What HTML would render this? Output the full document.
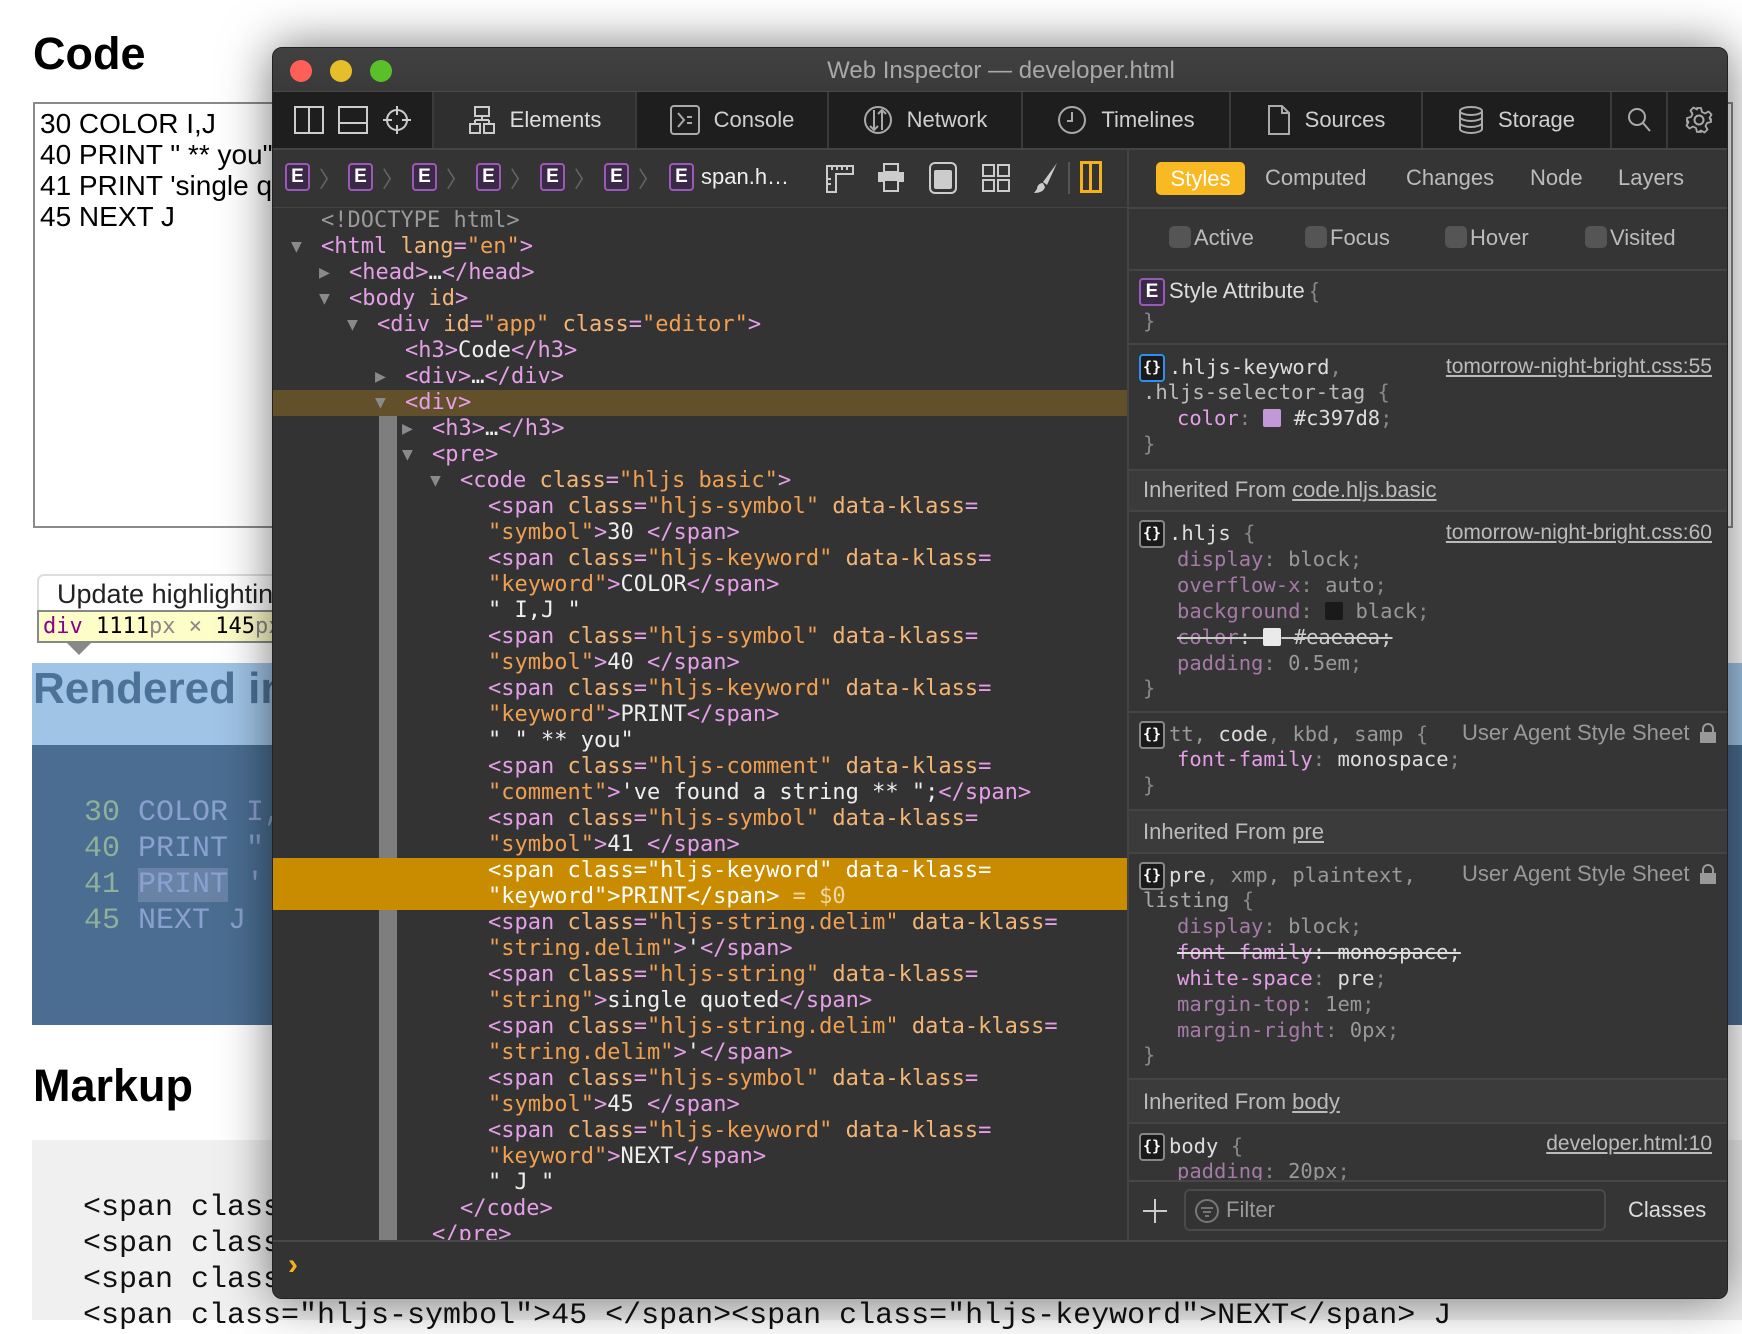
<!DOCTYPE html>
<html><head><meta charset="utf-8">
<style>
*{margin:0;padding:0;box-sizing:border-box}
body{width:1742px;height:1318px;overflow:hidden;background:#fff;position:relative;font-family:"Liberation Sans",sans-serif}
.a{position:absolute;white-space:pre}
.mono{font-family:"DejaVu Sans Mono","Liberation Mono",monospace}
#win{position:absolute;left:272px;top:47px;width:1456px;height:1252px;background:#333;border-radius:10px;box-shadow:0 0 50px rgba(0,0,0,.55);overflow:hidden;border:1px solid #222}
.t{color:#e59ee8}.n{color:#f2b575}.v{color:#f0a050}.x{color:#eee}.g{color:#999}
.tri{position:absolute;color:#8a8a8a;font-size:18px}
.tab{position:absolute;top:44px;height:56px;background:#1e1e1e;border-right:2px solid #3a3a3a;color:#cfcfcf;font-size:22px;display:flex;align-items:center;justify-content:center;gap:14px}
.eb{position:absolute;top:115px;width:25px;height:28px;border:2px solid #9b59b6;background:#3a2a48;border-radius:4px;color:#fff;font-weight:bold;font-size:19px;text-align:center;line-height:24px}
.chev{position:absolute;top:114px;color:#666;font-size:22px}
.sep{position:absolute;left:856px;width:600px;height:2px;background:#444}
.s{position:absolute;white-space:pre;font-size:22px;color:#ddd}
.sm{font-family:"DejaVu Sans Mono",monospace;font-size:20.5px}
.pp{color:#e59ee8}.pd{color:#a57aa7}.vd{color:#999}.pu{color:#888}
.ic{display:inline-block;width:26px;height:28px;border:2px solid #888;border-radius:4px;background:#1a1a1a;color:#fff;font-size:15px;font-weight:bold;text-align:center;line-height:23px;vertical-align:middle;margin-right:4px;font-family:"DejaVu Sans Mono",monospace}
.lnk{position:absolute;right:15px;color:#bbb;text-decoration:underline;font-size:21px}
.cb{display:inline-block;width:22px;height:22px;background:#555;border-radius:5px;vertical-align:-3px;margin-right:3px}
#dom div{position:relative;height:26px}
</style></head><body>

<div class="a" style="left:33px;top:28px;font-size:45px;font-weight:bold">Code</div>
<div class="a" style="left:33px;top:102px;width:1700px;height:426px;border:2px solid #8a8a8a"></div>
<div class="a" style="left:40px;top:108px;font-size:28px;line-height:31px">30 COLOR I,J
40 PRINT " ** you"
41 PRINT 'single quoted'
45 NEXT J</div>
<div class="a" style="left:37px;top:574px;width:300px;height:42px;border:2px solid #ddd;border-radius:7px"></div>
<div class="a" style="left:57px;top:579px;font-size:27px;color:#222">Update highlighting</div>
<div class="a mono" style="left:37px;top:610px;width:300px;height:33px;background:#fdfdc8;border:2px solid #888;font-size:22px;line-height:29px;padding-left:4px"><span style="color:#8b008b">div</span> 1111<span style="color:#888">px</span> <span style="color:#888">×</span> 145<span style="color:#888">px</span></div>
<div class="a" style="left:66px;top:642px;width:0;height:0;border-left:13px solid transparent;border-right:13px solid transparent;border-top:13px solid #888"></div>
<div class="a" style="left:32px;top:663px;width:1710px;height:82px;background:#a0c4e6"></div>
<div class="a" style="left:33px;top:664px;font-size:44px;font-weight:bold;color:#4d7298">Rendered in</div>
<div class="a" style="left:32px;top:745px;width:1710px;height:280px;background:#4a6d91"></div>
<div class="a" style="left:84px;top:795px;font-family:'Liberation Mono',monospace;font-size:30px;line-height:36px;color:#8aa0d0"><span style="color:#8fb09a">30</span> COLOR I,J
<span style="color:#8fb09a">40</span> PRINT "
<span style="color:#8fb09a">41</span> <span style="background:#6883a6">PRINT</span> '
<span style="color:#8fb09a">45</span> NEXT J</div>
<div class="a" style="left:33px;top:1060px;font-size:45px;font-weight:bold">Markup</div>
<div class="a" style="left:32px;top:1140px;width:1710px;height:180px;background:#f0f0f0"></div>
<div class="a" style="left:83px;top:1190px;font-family:'Liberation Mono',monospace;font-size:30px;line-height:36px;color:#111">&lt;span class="hljs-symbol"&gt;30 &lt;/span&gt;
&lt;span class="hljs-symbol"&gt;40 &lt;/span&gt;
&lt;span class="hljs-symbol"&gt;41 &lt;/span&gt;
&lt;span class="hljs-symbol"&gt;45 &lt;/span&gt;&lt;span class="hljs-keyword"&gt;NEXT&lt;/span&gt; J</div>

<div id="win">
 <div class="a" style="left:0;top:0;width:1456px;height:44px;background:linear-gradient(#414141,#3a3a3a);border-bottom:1px solid #4a4a4a"></div>
 <div class="a" style="left:17px;top:12px;width:22px;height:22px;border-radius:50%;background:#fe5f57"></div>
 <div class="a" style="left:57px;top:12px;width:22px;height:22px;border-radius:50%;background:#e6be29"></div>
 <div class="a" style="left:97px;top:12px;width:22px;height:22px;border-radius:50%;background:#5ac02a"></div>
 <div class="a" style="left:0;width:1456px;top:9px;text-align:center;font-size:24px;color:#a8a8a8">Web Inspector — developer.html</div>
 <div class="tab" style="left:0;width:161px;gap:14px">
  <svg width="30" height="28"><rect x="1" y="1" width="28" height="26" fill="none" stroke="#ccc" stroke-width="2"/><line x1="15" y1="1" x2="15" y2="27" stroke="#ccc" stroke-width="2"/></svg>
  <svg width="30" height="28"><rect x="1" y="1" width="28" height="26" fill="none" stroke="#ccc" stroke-width="2"/><line x1="1" y1="17" x2="29" y2="17" stroke="#ccc" stroke-width="2"/></svg>
  <svg width="30" height="30"><circle cx="15" cy="15" r="10" fill="none" stroke="#ccc" stroke-width="2"/><path d="M15 1v9M15 20v9M1 15h9M20 15h9" stroke="#ccc" stroke-width="2"/></svg>
 </div>
 <div class="tab" style="left:161px;width:203px;background:#2f2f2f;color:#ddd"><svg width="28" height="30"><rect x="7" y="2" width="14" height="9" fill="none" stroke="#ccc" stroke-width="2"/><rect x="2" y="19" width="10" height="9" fill="none" stroke="#ccc" stroke-width="2"/><rect x="16" y="19" width="10" height="9" fill="none" stroke="#ccc" stroke-width="2"/><path d="M14 11v4M7 15h14M7 15v4M21 15v4" stroke="#ccc" stroke-width="2" fill="none"/></svg>Elements</div>
 <div class="tab" style="left:364px;width:192px"><svg width="30" height="30"><rect x="1" y="1" width="28" height="28" rx="3" fill="none" stroke="#aaa" stroke-width="2"/><path d="M8 8l6 7-6 7M17 12h5M17 18h5" stroke="#aaa" stroke-width="2" fill="none"/></svg>Console</div>
 <div class="tab" style="left:556px;width:194px"><svg width="30" height="30"><circle cx="15" cy="15" r="13" fill="none" stroke="#aaa" stroke-width="2"/><path d="M11 5v20M7 21l4 4 4-4M19 25V5M15 9l4-4 4 4" stroke="#aaa" stroke-width="2" fill="none"/></svg>Network</div>
 <div class="tab" style="left:750px;width:208px"><svg width="30" height="30"><circle cx="15" cy="15" r="13" fill="none" stroke="#aaa" stroke-width="2"/><path d="M15 7v9h-5" stroke="#aaa" stroke-width="2" fill="none"/></svg>Timelines</div>
 <div class="tab" style="left:958px;width:192px"><svg width="24" height="30"><path d="M2 1h13l7 7v21H2z M15 1v7h7" stroke="#aaa" stroke-width="2" fill="none"/></svg>Sources</div>
 <div class="tab" style="left:1150px;width:189px"><svg width="26" height="30"><ellipse cx="13" cy="6" rx="11" ry="4" fill="none" stroke="#aaa" stroke-width="2"/><path d="M2 6v18c0 2 5 4 11 4s11-2 11-4V6M2 12c0 2 5 4 11 4s11-2 11-4M2 18c0 2 5 4 11 4s11-2 11-4" stroke="#aaa" stroke-width="2" fill="none"/></svg>Storage</div>
 <div class="tab" style="left:1339px;width:56px"><svg width="24" height="26"><circle cx="10" cy="10" r="8" fill="none" stroke="#aaa" stroke-width="2"/><path d="M16 16l7 8" stroke="#aaa" stroke-width="2"/></svg></div>
 <div class="tab" style="left:1395px;width:61px;border-right:0"><svg width="28" height="28" viewBox="0 0 28 28"><circle cx="14" cy="14" r="4.5" fill="none" stroke="#aaa" stroke-width="2"/><path d="M12 2h4l1 4 3 1.5 3.5-2 3 3-2 3.5L26 15v-2 3l-4 1-1.5 3 2 3.5-3 3-3.5-2L13 26h3-4l-1-4-3-1.5-3.5 2-3-3 2-3.5L2 14v2-4l4-1 1.5-3-2-3.5 3-3 3.5 2z" fill="none" stroke="#aaa" stroke-width="1.8" stroke-linejoin="round"/></svg></div>
 <div class="a" style="left:0;top:100px;width:1456px;height:2px;background:#444"></div>
 <div class="a" style="left:0;top:102px;width:856px;height:57px;background:#343434"></div>
 <div class="eb" style="left:12px">E</div><div class="chev" style="left:46px">〉</div>
 <div class="eb" style="left:75px">E</div><div class="chev" style="left:109px">〉</div>
 <div class="eb" style="left:139px">E</div><div class="chev" style="left:173px">〉</div>
 <div class="eb" style="left:203px">E</div><div class="chev" style="left:237px">〉</div>
 <div class="eb" style="left:267px">E</div><div class="chev" style="left:301px">〉</div>
 <div class="eb" style="left:331px">E</div><div class="chev" style="left:365px">〉</div>
 <div class="eb" style="left:396px">E</div>
 <div class="a" style="left:428px;top:116px;font-size:22px;color:#eee">span.h…</div>
 <svg class="a" style="left:552px;top:116px" width="30" height="30"><path d="M2 2h26v8H11v18H2z M7 2v4M12 2v4M17 2v4M22 2v4M2 15h4M2 20h4" stroke="#ccc" stroke-width="2" fill="none"/></svg>
 <svg class="a" style="left:603px;top:114px" width="30" height="32"><path d="M8 2h14v8H8z" stroke="#ccc" stroke-width="2" fill="none"/><rect x="2" y="10" width="26" height="10" fill="#ccc"/><rect x="8" y="18" width="14" height="11" fill="#333" stroke="#ccc" stroke-width="2"/></svg>
 <svg class="a" style="left:656px;top:114px" width="28" height="32"><rect x="1" y="1" width="26" height="30" rx="5" fill="none" stroke="#ccc" stroke-width="2"/><rect x="5" y="8" width="18" height="19" rx="2" fill="#ccc"/></svg>
 <svg class="a" style="left:709px;top:116px" width="28" height="28"><rect x="1" y="1" width="11" height="11" fill="none" stroke="#ccc" stroke-width="2"/><rect x="16" y="1" width="11" height="11" fill="none" stroke="#ccc" stroke-width="2"/><rect x="1" y="16" width="11" height="11" fill="none" stroke="#ccc" stroke-width="2"/><rect x="16" y="16" width="11" height="11" fill="none" stroke="#ccc" stroke-width="2"/></svg>
 <svg class="a" style="left:760px;top:114px" width="26" height="32"><path d="M24 1L10 20l4 3z" fill="#ccc"/><path d="M10 21c-4 0-6 3-6 6l-3 4c6 0 10-2 11-6z" fill="#ccc"/></svg>
 <div class="a" style="left:795px;top:114px;width:2px;height:32px;background:#555"></div>
 <div class="a" style="left:807px;top:113px;width:22px;height:32px;border:3px solid #f5b21e"></div>
 <div class="a" style="left:816px;top:113px;width:3px;height:32px;background:#f5b21e"></div>
 <div class="a" style="left:0;top:159px;width:856px;height:1px;background:#444"></div>
 <!-- DOM tree -->
 <div class="a" style="left:0;top:342px;width:856px;height:26px;background:#61502a"></div>
 <div class="a" style="left:0;top:810px;width:856px;height:52px;background:#c98b00"></div>
 <div class="a" style="left:106px;top:368px;width:18px;height:824px;background:#7e7e7e"></div>
 <div class="a" style="left:106px;top:810px;width:18px;height:52px;background:#c98b00"></div>
 <div id="dom" class="mono" style="position:absolute;left:0;top:160px;font-size:22px;line-height:26px;color:#eee;white-space:pre"><div style="padding-left:48px"><span class="g">&lt;!DOCTYPE html&gt;</span></div><div style="padding-left:48px"><span class="tri" style="left:18px">▼</span><span class="t">&lt;html</span> <span class="n">lang</span><span class="t">=</span><span class="v">"en"</span><span class="t">&gt;</span></div><div style="padding-left:76px"><span class="tri" style="left:46px">▶</span><span class="t">&lt;head&gt;</span>…<span class="t">&lt;/head&gt;</span></div><div style="padding-left:76px"><span class="tri" style="left:46px">▼</span><span class="t">&lt;body</span> <span class="n">id</span><span class="t">&gt;</span></div><div style="padding-left:104px"><span class="tri" style="left:74px">▼</span><span class="t">&lt;div</span> <span class="n">id</span><span class="t">=</span><span class="v">"app"</span> <span class="n">class</span><span class="t">=</span><span class="v">"editor"</span><span class="t">&gt;</span></div><div style="padding-left:132px"><span class="t">&lt;h3&gt;</span>Code<span class="t">&lt;/h3&gt;</span></div><div style="padding-left:132px"><span class="tri" style="left:102px">▶</span><span class="t">&lt;div&gt;</span>…<span class="t">&lt;/div&gt;</span></div><div style="padding-left:132px"><span class="tri" style="left:102px">▼</span><span class="t">&lt;div&gt;</span></div><div style="padding-left:159px"><span class="tri" style="left:129px">▶</span><span class="t">&lt;h3&gt;</span>…<span class="t">&lt;/h3&gt;</span></div><div style="padding-left:159px"><span class="tri" style="left:129px">▼</span><span class="t">&lt;pre&gt;</span></div><div style="padding-left:187px"><span class="tri" style="left:157px">▼</span><span class="t">&lt;code</span> <span class="n">class</span><span class="t">=</span><span class="v">"hljs basic"</span><span class="t">&gt;</span></div><div style="padding-left:215px;height:auto"><span class="t">&lt;span</span> <span class="n">class</span><span class="t">=</span><span class="v">"hljs-symbol"</span> <span class="n">data-klass</span><span class="t">=</span>
<span class="v">"symbol"</span><span class="t">&gt;</span>30 <span class="t">&lt;/span&gt;</span>
<span class="t">&lt;span</span> <span class="n">class</span><span class="t">=</span><span class="v">"hljs-keyword"</span> <span class="n">data-klass</span><span class="t">=</span>
<span class="v">"keyword"</span><span class="t">&gt;</span>COLOR<span class="t">&lt;/span&gt;</span>
" I,J "
<span class="t">&lt;span</span> <span class="n">class</span><span class="t">=</span><span class="v">"hljs-symbol"</span> <span class="n">data-klass</span><span class="t">=</span>
<span class="v">"symbol"</span><span class="t">&gt;</span>40 <span class="t">&lt;/span&gt;</span>
<span class="t">&lt;span</span> <span class="n">class</span><span class="t">=</span><span class="v">"hljs-keyword"</span> <span class="n">data-klass</span><span class="t">=</span>
<span class="v">"keyword"</span><span class="t">&gt;</span>PRINT<span class="t">&lt;/span&gt;</span>
" " ** you"
<span class="t">&lt;span</span> <span class="n">class</span><span class="t">=</span><span class="v">"hljs-comment"</span> <span class="n">data-klass</span><span class="t">=</span>
<span class="v">"comment"</span><span class="t">&gt;</span>'ve found a string ** ";<span class="t">&lt;/span&gt;</span>
<span class="t">&lt;span</span> <span class="n">class</span><span class="t">=</span><span class="v">"hljs-symbol"</span> <span class="n">data-klass</span><span class="t">=</span>
<span class="v">"symbol"</span><span class="t">&gt;</span>41 <span class="t">&lt;/span&gt;</span>
<span style="color:#fff">&lt;span class="hljs-keyword" data-klass=
"keyword"&gt;PRINT&lt;/span&gt; <span style="color:#f0d9a0">= $0</span></span>
<span class="t">&lt;span</span> <span class="n">class</span><span class="t">=</span><span class="v">"hljs-string.delim"</span> <span class="n">data-klass</span><span class="t">=</span>
<span class="v">"string.delim"</span><span class="t">&gt;</span>'<span class="t">&lt;/span&gt;</span>
<span class="t">&lt;span</span> <span class="n">class</span><span class="t">=</span><span class="v">"hljs-string"</span> <span class="n">data-klass</span><span class="t">=</span>
<span class="v">"string"</span><span class="t">&gt;</span>single quoted<span class="t">&lt;/span&gt;</span>
<span class="t">&lt;span</span> <span class="n">class</span><span class="t">=</span><span class="v">"hljs-string.delim"</span> <span class="n">data-klass</span><span class="t">=</span>
<span class="v">"string.delim"</span><span class="t">&gt;</span>'<span class="t">&lt;/span&gt;</span>
<span class="t">&lt;span</span> <span class="n">class</span><span class="t">=</span><span class="v">"hljs-symbol"</span> <span class="n">data-klass</span><span class="t">=</span>
<span class="v">"symbol"</span><span class="t">&gt;</span>45 <span class="t">&lt;/span&gt;</span>
<span class="t">&lt;span</span> <span class="n">class</span><span class="t">=</span><span class="v">"hljs-keyword"</span> <span class="n">data-klass</span><span class="t">=</span>
<span class="v">"keyword"</span><span class="t">&gt;</span>NEXT<span class="t">&lt;/span&gt;</span>
" J "</div><div style="padding-left:187px"><span class="t">&lt;/code&gt;</span></div><div style="padding-left:159px"><span class="t">&lt;/pre&gt;</span></div></div>
 <div class="a" style="left:0;top:1192px;width:1456px;height:60px;background:#333;border-top:2px solid #484848"></div>
 <div class="a" style="left:15px;top:1200px;font-size:30px;color:#f5b21e;font-weight:bold">›</div>
 <div class="a" style="left:854px;top:102px;width:2px;height:1090px;background:#444"></div>
 <div class="a" style="left:856px;top:102px;width:600px;height:1090px;background:#353535"></div>
 <div class="a" style="left:883px;top:114px;width:89px;height:33px;background:#f9b923;border-radius:5px;color:#fff;font-size:22px;text-align:center;line-height:33px">Styles</div>
 <div class="s" style="left:992px;top:117px;color:#bbb">Computed</div>
 <div class="s" style="left:1133px;top:117px;color:#bbb">Changes</div>
 <div class="s" style="left:1257px;top:117px;color:#bbb">Node</div>
 <div class="s" style="left:1345px;top:117px;color:#bbb">Layers</div>
 <div class="sep" style="top:159px"></div>
 <div class="s" style="left:896px;top:177px;color:#bbb"><span class="cb"></span>Active</div>
 <div class="s" style="left:1032px;top:177px;color:#bbb"><span class="cb"></span>Focus</div>
 <div class="s" style="left:1172px;top:177px;color:#bbb"><span class="cb"></span>Hover</div>
 <div class="s" style="left:1312px;top:177px;color:#bbb"><span class="cb"></span>Visited</div>
 <div class="sep" style="top:221px"></div>
 <div class="s" style="left:866px;top:230px"><span class="ic" style="border-color:#9b59b6;background:#3a2a48;font-family:'Liberation Sans';font-size:19px">E</span>Style Attribute <span class="pu">{</span></div>
 <div class="s sm" style="left:870px;top:261px;color:#888">}</div>
 <div class="sep" style="top:295px"></div>
 <div class="s sm" style="left:866px;top:306px"><span class="ic" style="border-color:#2f8ff0">{}</span>.hljs-keyword<span class="pu">,</span></div>
 <div class="lnk" style="top:307px">tomorrow-night-bright.css:55</div>
 <div class="s sm" style="left:870px;top:332px;color:#bbb">.hljs-selector-tag <span class="pu">{</span></div>
 <div class="s sm" style="left:904px;top:358px"><span class="pp">color</span><span class="pu">:</span> <span style="display:inline-block;width:18px;height:18px;background:#c397d8;vertical-align:-2px;border-radius:2px"></span> #c397d8<span class="pu">;</span></div>
 <div class="s sm" style="left:870px;top:384px;color:#888">}</div>
 <div class="a" style="left:856px;top:421px;width:600px;height:43px;background:#3b3b3b;border-top:2px solid #444;border-bottom:2px solid #444"></div>
 <div class="s" style="left:870px;top:429px;color:#bbb">Inherited From <u>code.hljs.basic</u></div>
 <div class="s sm" style="left:866px;top:472px"><span class="ic">{}</span>.hljs <span class="pu">{</span></div>
 <div class="lnk" style="top:473px">tomorrow-night-bright.css:60</div>
 <div class="s sm" style="left:904px;top:498px;line-height:26px"><span class="pd">display</span><span class="pu">:</span> <span class="vd">block</span><span class="pu">;</span>
<span class="pd">overflow-x</span><span class="pu">:</span> <span class="vd">auto</span><span class="pu">;</span>
<span class="pd">background</span><span class="pu">:</span> <span style="display:inline-block;width:18px;height:18px;background:#1a1a1a;vertical-align:-2px;border-radius:2px"></span> <span class="vd">black</span><span class="pu">;</span>
<span style="text-decoration:line-through;color:#ccc"><span class="pd">color</span>: <span style="display:inline-block;width:18px;height:18px;background:#eaeaea;vertical-align:-2px;border-radius:2px"></span> #eaeaea;</span>
<span class="pd">padding</span><span class="pu">:</span> <span class="vd">0.5em</span><span class="pu">;</span></div>
 <div class="s sm" style="left:870px;top:628px;color:#888">}</div>
 <div class="sep" style="top:663px"></div>
 <div class="s sm" style="left:866px;top:673px"><span class="ic">{}</span><span class="vd">tt,</span> code<span class="pu">,</span> <span class="vd">kbd, samp</span> <span class="pu">{</span></div>
 <div class="s" style="left:1189px;top:672px;color:#999">User Agent Style Sheet</div>
 <svg class="a" style="left:1426px;top:674px" width="18" height="22"><path d="M4 10V7a5 5 0 0110 0v3" stroke="#999" stroke-width="2" fill="none"/><rect x="1" y="10" width="16" height="11" fill="#999"/></svg>
 <div class="s sm" style="left:904px;top:699px"><span class="pp">font-family</span><span class="pu">:</span> monospace<span class="pu">;</span></div>
 <div class="s sm" style="left:870px;top:725px;color:#888">}</div>
 <div class="a" style="left:856px;top:761px;width:600px;height:45px;background:#3b3b3b;border-top:2px solid #444;border-bottom:2px solid #444"></div>
 <div class="s" style="left:870px;top:771px;color:#bbb">Inherited From <u>pre</u></div>
 <div class="s sm" style="left:866px;top:814px"><span class="ic">{}</span>pre<span class="pu">,</span> <span class="vd">xmp, plaintext,</span></div>
 <div class="s" style="left:1189px;top:813px;color:#999">User Agent Style Sheet</div>
 <svg class="a" style="left:1426px;top:815px" width="18" height="22"><path d="M4 10V7a5 5 0 0110 0v3" stroke="#999" stroke-width="2" fill="none"/><rect x="1" y="10" width="16" height="11" fill="#999"/></svg>
 <div class="s sm" style="left:870px;top:840px;color:#aaa">listing <span class="pu">{</span></div>
 <div class="s sm" style="left:904px;top:865px;line-height:26px"><span class="pd">display</span><span class="pu">:</span> <span class="vd">block</span><span class="pu">;</span>
<span style="text-decoration:line-through;color:#ddd"><span class="pp">font-family</span>: monospace;</span>
<span class="pp">white-space</span><span class="pu">:</span> pre<span class="pu">;</span>
<span class="pd">margin-top</span><span class="pu">:</span> <span class="vd">1em</span><span class="pu">;</span>
<span class="pd">margin-right</span><span class="pu">:</span> <span class="vd">0px</span><span class="pu">;</span></div>
 <div class="s sm" style="left:870px;top:995px;color:#888">}</div>
 <div class="a" style="left:856px;top:1030px;width:600px;height:46px;background:#3b3b3b;border-top:2px solid #444;border-bottom:2px solid #444"></div>
 <div class="s" style="left:870px;top:1041px;color:#bbb">Inherited From <u>body</u></div>
 <div class="a" style="left:856px;top:1076px;width:600px;height:56px;overflow:hidden">
  <div class="s sm" style="left:10px;top:9px"><span class="ic">{}</span>body <span class="pu">{</span></div>
  <div class="s sm" style="left:48px;top:35px"><span class="pd">padding</span><span class="pu">:</span> <span class="vd">20px</span><span class="pu">;</span></div>
 </div>
 <div class="lnk" style="top:1084px">developer.html:10</div>
 <div class="a" style="left:856px;top:1132px;width:600px;height:60px;background:#353535;border-top:2px solid #474747"></div>
 <div class="a" style="left:870px;top:1162px;width:24px;height:2px;background:#ccc"></div>
 <div class="a" style="left:881px;top:1151px;width:2px;height:24px;background:#ccc"></div>
 <div class="a" style="left:911px;top:1141px;width:422px;height:42px;border:2px solid #4a4a4a;border-radius:6px;background:#333"></div>
 <svg class="a" style="left:921px;top:1150px" width="26" height="26"><circle cx="13" cy="13" r="11" fill="none" stroke="#777" stroke-width="2"/><path d="M7 10h12M9 14h8M11 18h4" stroke="#777" stroke-width="2"/></svg>
 <div class="s" style="left:953px;top:1149px;color:#999">Filter</div>
 <div class="s" style="left:1355px;top:1149px;color:#ddd">Classes</div>
</div>
</body></html>
